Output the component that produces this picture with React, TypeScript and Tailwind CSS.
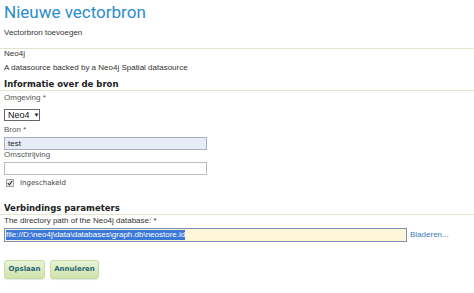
import React from "react";

const line = "h-px w-full bg-[#e2e6cf]";

function Heading({ text }: { text: string }) {
  return (
    <div className="border-b border-[#e2e6cf]">
      <div className="pl-[4px] h-[12px] leading-[12px] font-['DejaVu_Sans',sans-serif] font-bold text-[8.5px] text-[#222]">
        {text}
      </div>
    </div>
  );
}

function Label({ text, className = "" }: { text: string; className?: string }) {
  return (
    <div className={"pl-[4px] h-[10px] leading-[10px] text-[#555] " + className}>
      {text}
    </div>
  );
}

function App() {
  return (
    <div className="w-[474px] h-[293px] overflow-hidden bg-white font-['Liberation_Sans',Arial,sans-serif] text-[8px] text-[#333]">
      <h1 className="pl-[4px] h-[24px] leading-[24px] font-['Roboto',sans-serif] text-[17px] text-[#2a8ccc]">
        Nieuwe vectorbron
      </h1>
      <div className="pl-[4px] mt-[4px] h-[10px] leading-[10px]">Vectorbron toevoegen</div>

      <div className={"mt-[10px] " + line} />
      <div className="pl-[4px] h-[10px] leading-[10px]">Neo4j</div>
      <div className="pl-[4px] mt-[4px] h-[10px] leading-[10px]">
        A datasource backed by a Neo4j Spatial datasource
      </div>

      <div className="mt-[5px]">
        <Heading text="Informatie over de bron" />
      </div>

      <div className="pl-[4px]">
        <div className="mt-[2px] h-[10px] leading-[10px] text-[#555]">Omgeving *</div>
        <div className="mt-[6px] flex items-center w-[36px] h-[12px] border border-[#666] bg-white px-[3px] gap-[4px]">
          <span className="text-[9px] leading-[10px] text-[#111]">Neo4</span>
          <span className="text-[6px] leading-[10px] text-[#222]">▼</span>
        </div>
      </div>

      <Label text="Bron *" className="mt-[4px]" />
      <div className="pl-[4px] mt-[2px]">
        <div className="w-[203px] h-[13px] border border-[#a7b0c0] bg-[#e6edf9] px-[3px] leading-[11px] text-[8px] text-[#222]">
          test
        </div>
      </div>

      <Label text="Omschrijving" />
      <div className="pl-[4px] mt-[2px]">
        <div className="w-[203px] h-[13px] border border-[#b9bcc0] bg-white" />
      </div>

      <div className="pl-[6px] mt-[3px] h-[10px] flex items-center gap-[6px]">
        <span className="w-[8px] h-[8px] border border-[#a0a0a0] bg-[#eeeeee] flex items-center justify-center">
          <svg width="6" height="6" viewBox="0 0 6 6">
            <path d="M0.8 3.2 L2.4 4.8 L5.2 1" stroke="#333" strokeWidth="1.2" fill="none" />
          </svg>
        </span>
        <span className="font-['DejaVu_Sans',sans-serif] text-[7px] text-[#444] leading-[10px]">Ingeschakeld</span>
      </div>

      <div className="mt-[14px]">
        <Heading text="Verbindings parameters" />
      </div>
      <div className="pl-[4px] mt-[1px] h-[10px] leading-[10px] text-[#333]">
        The directory path of the Neo4j database: *
      </div>
      <div className="pl-[4px] mt-[2px] flex items-center gap-[3px]">
        <div className="w-[403px] h-[14px] border border-[#7d8fb5] bg-[#fdf6d9] px-px flex items-center">
          <span className="bg-[#3a77d6] text-white leading-[10px] text-[8px]">
            file://D:\neo4j\data\databases\graph.db\neostore.id
          </span>
        </div>
        <span className="text-[#3a7bb4] text-[8px] leading-[10px]">Bladeren...</span>
      </div>

      <div className="pl-[4px] mt-[18px] flex gap-[5px]">
        <button className="w-[41px] h-[19px] rounded-[3px] border border-[#c6dca4] bg-gradient-to-b from-[#e9f3d6] to-[#cfe3ab] font-['DejaVu_Sans',sans-serif] font-bold text-[7px] text-[#2b6672] shadow-[0_1px_1px_rgba(0,0,0,0.1)]">
          Opslaan
        </button>
        <button className="w-[49px] h-[19px] rounded-[3px] border border-[#c6dca4] bg-gradient-to-b from-[#e9f3d6] to-[#cfe3ab] font-['DejaVu_Sans',sans-serif] font-bold text-[7px] text-[#2b6672] shadow-[0_1px_1px_rgba(0,0,0,0.1)]">
          Annuleren
        </button>
      </div>
    </div>
  );
}

export default App;
